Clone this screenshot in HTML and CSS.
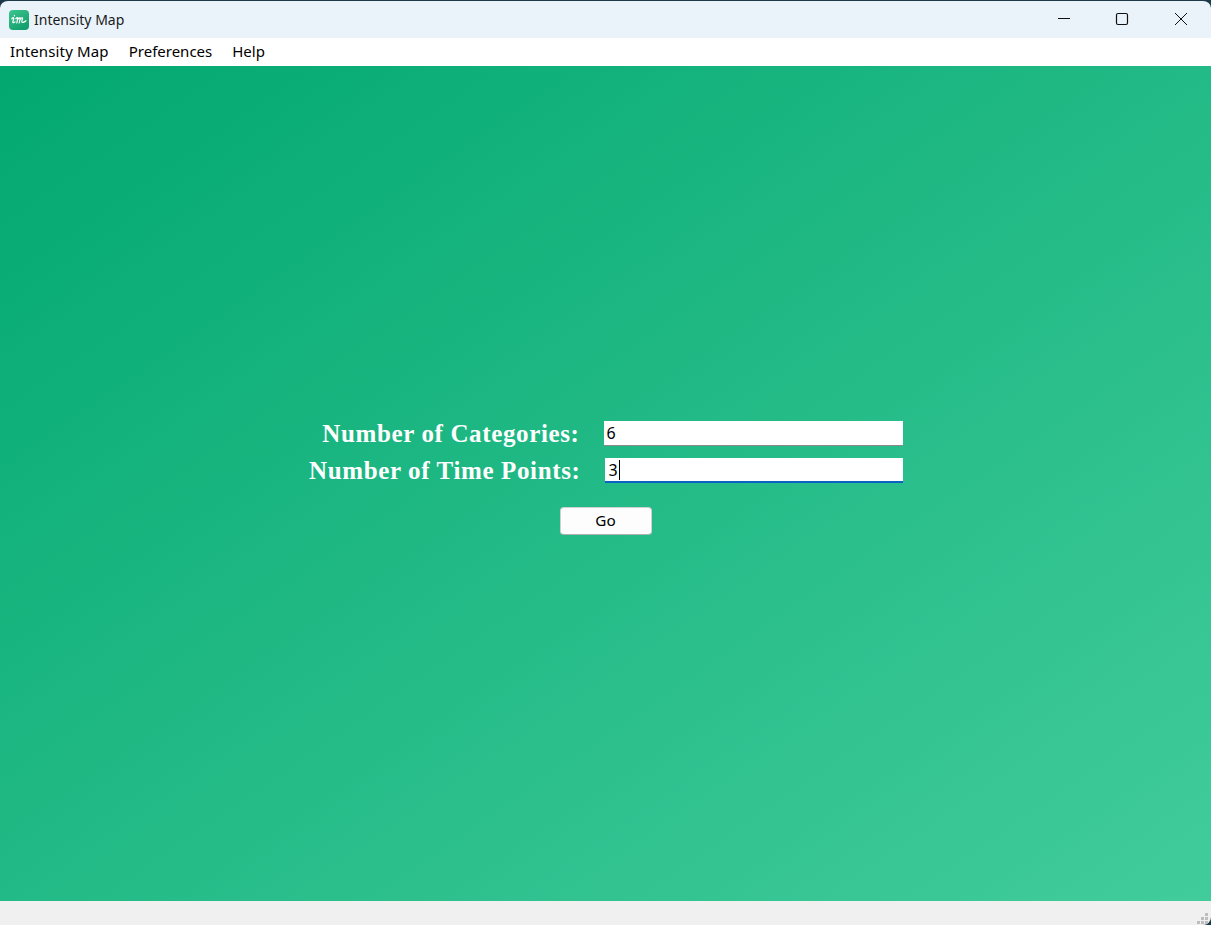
FILE: index.html
```html
<!DOCTYPE html>
<html lang="en">
<head>
<meta charset="utf-8">
<title>Intensity Map</title>
<link rel="stylesheet" href="styles.css">
</head>
<body>
<div class="window">
  <header class="titlebar">
    <div class="app">
      <svg class="app-icon" viewBox="0 0 20 20" aria-hidden="true">
        <defs>
          <linearGradient id="ig" x1="0" y1="0" x2="0.6" y2="1">
            <stop offset="0" stop-color="#3cc68f"/>
            <stop offset="1" stop-color="#149f6e"/>
          </linearGradient>
        </defs>
        <rect width="20" height="20" rx="4" fill="url(#ig)"/>
        <path d="M2.800 8.800 C3.600 7.600 4.800 7.200 4.800 8.200 L3.800 12 C3.800 13 5 12.800 6 11.800 M5.400 5.400 L5.500 5.800 M6.800 8.800 C7.800 7.400 8.800 7.200 8.800 8.200 L7.800 13 M8.200 10.400 C9.200 8.400 11 7 11.200 8.200 L10.200 13 M10.600 10.400 C11.600 8.400 13.400 7 13.600 8.200 L12.800 11.400 C12.800 13 14.800 12.600 17 10.800" fill="none" stroke="#fff" stroke-width="1.200" stroke-linecap="round"/>
      </svg>
      <span class="app-title">Intensity Map</span>
    </div>
    <div class="controls">
      <svg class="control" viewBox="0 0 59 38" aria-hidden="true"><path d="M27 18.500H39" stroke="#111" fill="none"/></svg>
      <svg class="control" viewBox="0 0 59 38" aria-hidden="true"><rect x="26.500" y="13.500" width="11" height="11" rx="1.500" stroke="#111" stroke-width="1.200" fill="none"/></svg>
      <svg class="control" viewBox="0 0 59 38" aria-hidden="true"><path d="M26 13L38 25M38 13L26 25" stroke="#111" fill="none"/></svg>
    </div>
  </header>
  <nav class="menubar">
    <span class="menu-item menu-item-first">Intensity Map</span>
    <span class="menu-item">Preferences</span>
    <span class="menu-item">Help</span>
  </nav>
  <main class="content">
    <div class="form">
      <div class="row">
        <span class="label">Number of Categories:</span>
        <div class="field">6</div>
      </div>
      <div class="row row-second">
        <span class="label">Number of Time Points:</span>
        <div class="field field-focus">3<span class="caret"></span></div>
      </div>
      <button class="go" type="button">Go</button>
    </div>
  </main>
  <footer class="statusbar">
    <svg class="grip" viewBox="0 0 11 12" aria-hidden="true">
      <path d="M8 0h3v3H8zM4 4h3v3H4zM8 4h3v3H8zM0 8h3v3H0zM4 8h3v3H4zM8 8h3v3H8z" fill="#bdbdbd"/>
    </svg>
  </footer>
</div>
</body>
</html>
```

FILE: styles.css
```css
* {
  box-sizing: border-box;
}

html,
body {
  margin: 0;
  height: 100%;
  background: #1d3a48;
}

body {
  overflow: hidden;
  font-family: "Noto Sans", "Open Sans", "Liberation Sans", sans-serif;
  color: #000;
}

.window {
  display: flex;
  flex-direction: column;
  height: 925px;
  border-top: 1px solid #1d3a48;
  border-radius: 8px 8px 8px 0;
  overflow: hidden;
}

.titlebar {
  display: flex;
  justify-content: space-between;
  align-items: center;
  height: 37px;
  flex: none;
  background: #eaf3fa;
}

.app {
  display: flex;
  align-items: center;
  gap: 5px;
  padding-left: 9px;
}

.app-icon {
  width: 20px;
  height: 20px;
  display: block;
}

.app-title {
  font-size: 14px;
  color: #1a1a1a;
}

.controls {
  display: flex;
  margin-top: -1px;
  padding-right: 3px;
}

.control {
  display: block;
  width: 59px;
  height: 38px;
}

.menubar {
  display: flex;
  align-items: center;
  gap: 20px;
  height: 28px;
  flex: none;
  padding: 0 0 2px 10px;
  background: #fff;
  font-size: 15px;
}

.menu-item-first {
  letter-spacing: 0.150px;
}

.content {
  flex: 1;
  display: flex;
  align-items: center;
  justify-content: center;
  padding-bottom: 11px;
  background: linear-gradient(to bottom right, #02a870, #42cc9c);
}

.form {
  display: flex;
  flex-direction: column;
  align-items: center;
  width: 594px;
}

.row {
  display: flex;
  justify-content: flex-end;
  align-items: center;
  width: 100%;
  height: 25px;
}

.row-second {
  margin-top: 12px;
}

.label {
  margin-right: 24px;
  font-family: "Liberation Serif", serif;
  font-weight: 700;
  font-size: 25px;
  letter-spacing: 0.630px;
  color: #fff;
  white-space: nowrap;
}

.field {
  display: flex;
  align-items: center;
  width: 299px;
  height: 25px;
  padding-left: 3px;
  background: #fff;
  border-bottom: 1px solid #8a8a8a;
  font-size: 16px;
}

.field-focus {
  width: 298px;
  padding-left: 4px;
  border-bottom: 2px solid #0a62c4;
}

.caret {
  width: 1px;
  height: 20px;
  margin-left: 1px;
  background: #000;
}

.go {
  width: 92px;
  height: 28px;
  margin-top: 24px;
  padding: 0 0 2px;
  background: #fdfdfd;
  border: 1px solid #d0d0d0;
  border-bottom-color: #b0b0b0;
  border-radius: 4px;
  font-family: inherit;
  font-size: 15.300px;
  color: #000;
}

.statusbar {
  display: flex;
  justify-content: flex-end;
  align-items: flex-end;
  height: 24px;
  flex: none;
  background: #f0f0f0;
}

.grip {
  display: block;
  width: 11px;
  height: 12px;
  margin-right: 3px;
}
```
